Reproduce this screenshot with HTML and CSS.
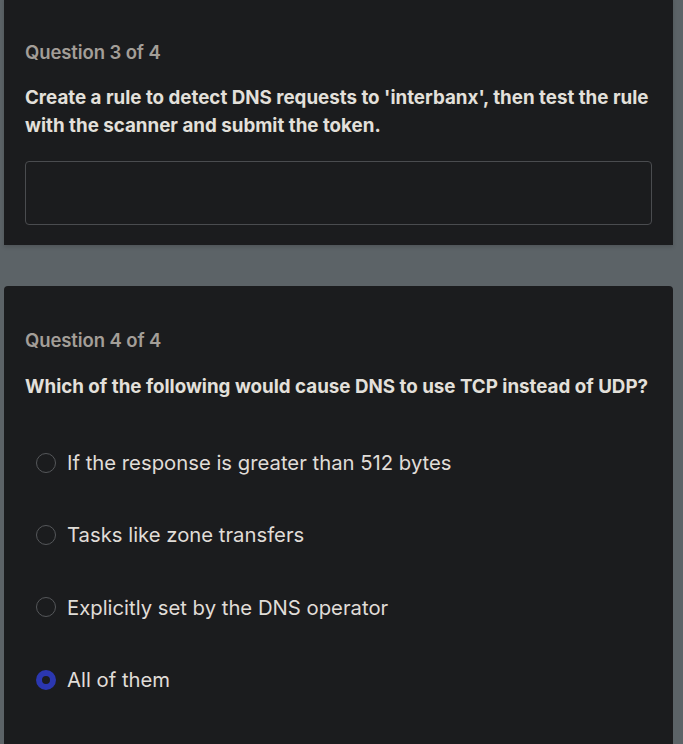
FILE: index.html
```html
<!DOCTYPE html>
<html>
<head>
<meta charset="utf-8">
<link rel="stylesheet" href="styles.css">
</head>
<body>
<main class="page">
  <section class="card card-first">
    <div class="q-label">Question 3 of 4</div>
    <div class="q-text">Create a rule to detect DNS requests to 'interbanx', then test the rule with the scanner and submit the token.</div>
    <input class="answer" type="text">
  </section>
  <section class="card card-second">
    <div class="q-label">Question 4 of 4</div>
    <div class="q-text">Which of the following would cause DNS to use TCP instead of UDP?</div>
    <ul class="options">
      <li class="option"><span class="radio"></span><span class="opt-text">If the response is greater than 512 bytes</span></li>
      <li class="option"><span class="radio"></span><span class="opt-text">Tasks like zone transfers</span></li>
      <li class="option"><span class="radio"></span><span class="opt-text">Explicitly set by the DNS operator</span></li>
      <li class="option"><span class="radio checked"></span><span class="opt-text">All of them</span></li>
    </ul>
  </section>
</main>
</body>
</html>
```

FILE: styles.css
```css
html, body {
  margin: 0;
  padding: 0;
  background: #5c6367;
  font-family: Inter, "Noto Sans", sans-serif;
  height: 744px;
  overflow: hidden;
}
.page {
  display: flex;
  flex-direction: column;
  gap: 41px;
  padding: 0 10px 0 4px;
}
.card {
  background: #1b1c1e;
  padding: 42px 21px 20px 21px;
  display: flex;
  flex-direction: column;
}
.card-first {
  margin-top: -3px;
  box-shadow: 0 2px 4px rgba(0,0,0,0.15);
}
.card-second {
  border-radius: 4px 4px 0 0;
  padding-top: 41px;
  min-height: 600px;
}
.q-label {
  font-size: 18.5px;
  font-weight: 600;
  line-height: 26px;
  color: #a39e98;
  letter-spacing: -0.1px;
}
.q-text {
  margin-top: 19px;
  font-size: 18.75px;
  font-weight: 700;
  line-height: 28px;
  color: #e3e0db;
}
.card-second .q-text {
  margin-top: 20px;
}
.answer {
  margin-top: 21px;
  height: 64px;
  box-sizing: border-box;
  border: 1px solid #4a4c4f;
  border-radius: 4px;
  background: #1b1c1e;
  outline: none;
}
.options {
  list-style: none;
  margin: 48px 0 0 0;
  padding: 0 0 0 11px;
  display: flex;
  flex-direction: column;
  gap: 45.4px;
}
.option {
  display: flex;
  align-items: center;
  gap: 11px;
  height: 27px;
}
.radio {
  width: 20px;
  height: 20px;
  box-sizing: border-box;
  border: 1px solid #55575a;
  border-radius: 50%;
  flex: none;
}
.radio.checked {
  border: 6px solid #2b37b0;
  background: #1b1c1e;
}
.opt-text {
  font-size: 20.3px;
  line-height: 27px;
  color: #e0ddd8;
}
```
